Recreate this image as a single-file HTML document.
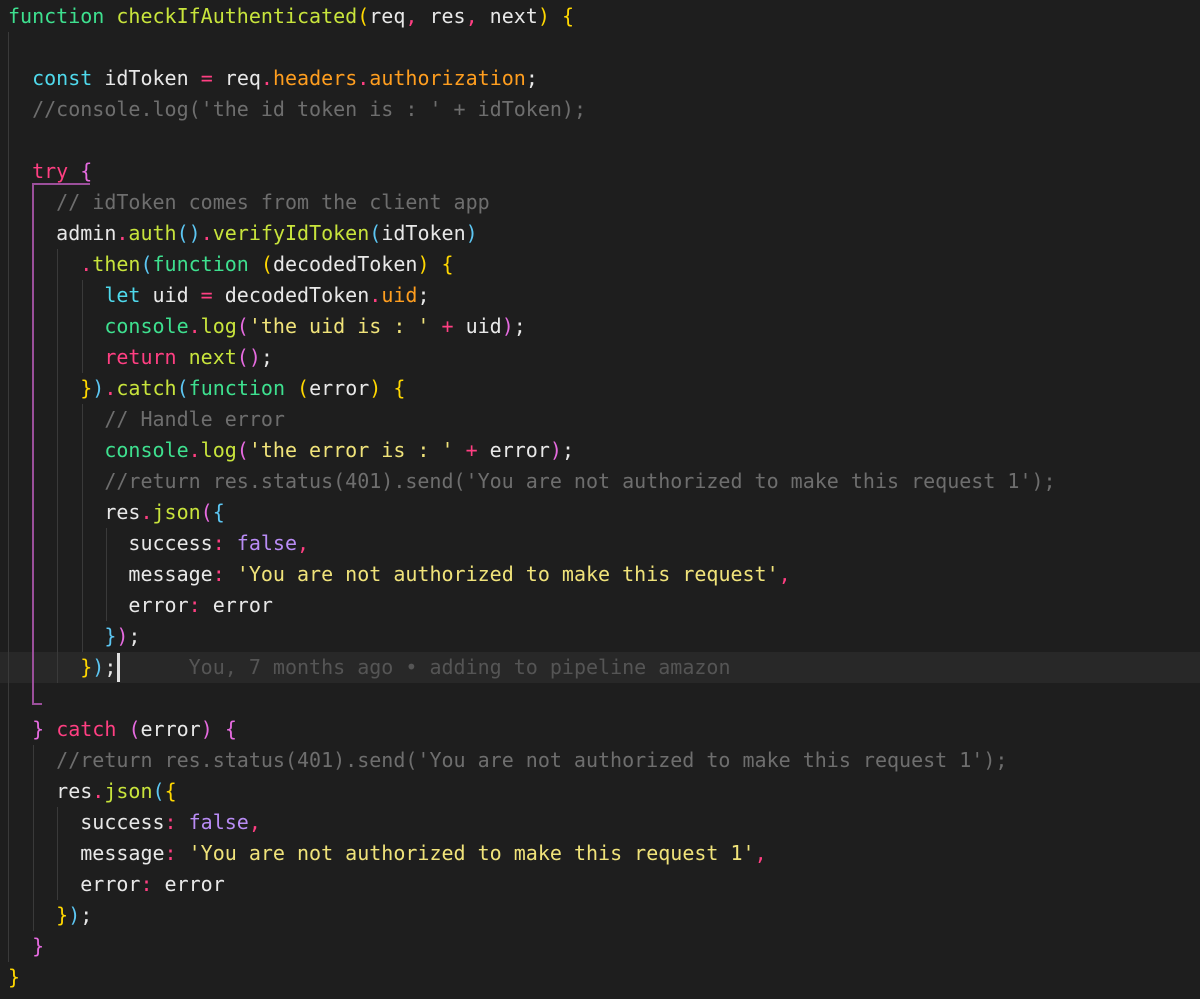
<!DOCTYPE html>
<html><head><meta charset="utf-8"><style>
html,body{margin:0;padding:0;background:#1e1e1e;width:1200px;height:999px;overflow:hidden}
#ed{position:relative;width:1200px;height:999px;font-family:"DejaVu Sans Mono","Liberation Mono",monospace;font-size:20px;color:#e8e8e8}
.l{position:absolute;left:8px;height:31px;line-height:31px;white-space:pre}
.g{position:absolute;width:1px;background:#3a3a3a}
.k{color:#3ee08f}.f{color:#c8e43c}.c{color:#4fd9ec}.p{color:#ff3f82}.o{color:#ff9e1f}
.cm{color:#6e6e6e}.s{color:#f0e37a}.b{color:#b98cf5}
.y{color:#ffd700}.m{color:#e66be0}.u{color:#5cc6f2}
</style></head><body><div id="ed">
<div style="position:absolute;left:0;top:652px;width:1200px;height:31px;background:#282828"></div>
<div class="g" style="left:8px;top:32px;height:930px"></div>
<div class="g" style="left:33px;top:745px;height:186px"></div>
<div class="g" style="left:57px;top:249px;height:434px"></div>
<div class="g" style="left:82px;top:280px;height:93px"></div>
<div class="g" style="left:82px;top:404px;height:248px"></div>
<div class="g" style="left:106px;top:528px;height:93px"></div>
<div class="g" style="left:57px;top:807px;height:93px"></div>
<div style="position:absolute;left:32px;top:183px;width:2px;height:522px;background:#9b4f9b"></div>
<div style="position:absolute;left:32px;top:183px;width:58px;height:2px;background:#9b4f9b"></div>
<div style="position:absolute;left:32px;top:703px;width:10px;height:2px;background:#9b4f9b"></div>
<div style="position:absolute;left:117px;top:653px;width:3px;height:29px;background:#e0e0e0"></div>

<div class="l" style="top:1px"><span class="k">function</span> <span class="f">checkIfAuthenticated</span><span class="y">(</span>req<span class="p">,</span> res<span class="p">,</span> next<span class="y">)</span> <span class="y">{</span></div>
<div class="l" style="top:63px">  <span class="c">const</span> idToken <span class="p">=</span> req<span class="p">.</span><span class="o">headers</span><span class="p">.</span><span class="o">authorization</span>;</div>
<div class="l" style="top:94px">  <span class="cm">//console.log('the id token is : ' + idToken);</span></div>
<div class="l" style="top:156px">  <span class="p">try</span> <span class="m">{</span></div>
<div class="l" style="top:187px">    <span class="cm">// idToken comes from the client app</span></div>
<div class="l" style="top:218px">    admin<span class="p">.</span><span class="f">auth</span><span class="u">()</span><span class="p">.</span><span class="f">verifyIdToken</span><span class="u">(</span>idToken<span class="u">)</span></div>
<div class="l" style="top:249px">      <span class="p">.</span><span class="f">then</span><span class="u">(</span><span class="k">function</span> <span class="y">(</span>decodedToken<span class="y">)</span> <span class="y">{</span></div>
<div class="l" style="top:280px">        <span class="c">let</span> uid <span class="p">=</span> decodedToken<span class="p">.</span><span class="o">uid</span>;</div>
<div class="l" style="top:311px">        <span class="k">console</span><span class="p">.</span><span class="f">log</span><span class="m">(</span><span class="s">'the uid is : '</span> <span class="p">+</span> uid<span class="m">)</span>;</div>
<div class="l" style="top:342px">        <span class="p">return</span> <span class="f">next</span><span class="m">()</span>;</div>
<div class="l" style="top:373px">      <span class="y">}</span><span class="u">)</span><span class="p">.</span><span class="f">catch</span><span class="u">(</span><span class="k">function</span> <span class="y">(</span>error<span class="y">)</span> <span class="y">{</span></div>
<div class="l" style="top:404px">        <span class="cm">// Handle error</span></div>
<div class="l" style="top:435px">        <span class="k">console</span><span class="p">.</span><span class="f">log</span><span class="m">(</span><span class="s">'the error is : '</span> <span class="p">+</span> error<span class="m">)</span>;</div>
<div class="l" style="top:466px">        <span class="cm">//return res.status(401).send('You are not authorized to make this request 1');</span></div>
<div class="l" style="top:497px">        res<span class="p">.</span><span class="f">json</span><span class="m">(</span><span class="u">{</span></div>
<div class="l" style="top:528px">          success<span class="p">:</span> <span class="b">false</span><span class="p">,</span></div>
<div class="l" style="top:559px">          message<span class="p">:</span> <span class="s">'You are not authorized to make this request'</span><span class="p">,</span></div>
<div class="l" style="top:590px">          error<span class="p">:</span> error</div>
<div class="l" style="top:621px">        <span class="u">}</span><span class="m">)</span>;</div>
<div class="l" style="top:652px">      <span class="y">}</span><span class="u">)</span>;      <span style="color:#555555">You, 7 months ago • adding to pipeline amazon</span></div>
<div class="l" style="top:714px">  <span class="m">}</span> <span class="p">catch</span> <span class="m">(</span>error<span class="m">)</span> <span class="m">{</span></div>
<div class="l" style="top:745px">    <span class="cm">//return res.status(401).send('You are not authorized to make this request 1');</span></div>
<div class="l" style="top:776px">    res<span class="p">.</span><span class="f">json</span><span class="u">(</span><span class="y">{</span></div>
<div class="l" style="top:807px">      success<span class="p">:</span> <span class="b">false</span><span class="p">,</span></div>
<div class="l" style="top:838px">      message<span class="p">:</span> <span class="s">'You are not authorized to make this request 1'</span><span class="p">,</span></div>
<div class="l" style="top:869px">      error<span class="p">:</span> error</div>
<div class="l" style="top:900px">    <span class="y">}</span><span class="u">)</span>;</div>
<div class="l" style="top:931px">  <span class="m">}</span></div>
<div class="l" style="top:962px"><span class="y">}</span></div>
</div></body></html>
